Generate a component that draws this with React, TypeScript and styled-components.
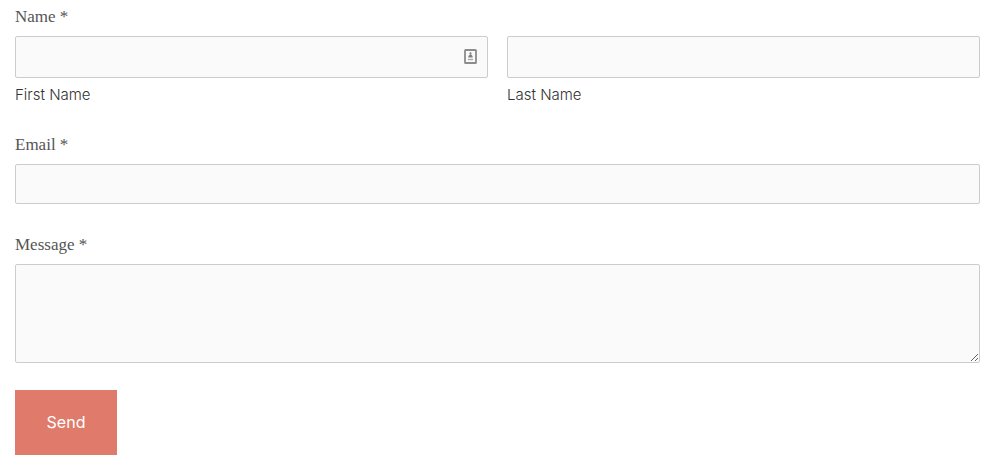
import React from "react";
import styled, { createGlobalStyle } from "styled-components";

const GlobalStyle = createGlobalStyle`
  *, *::before, *::after { box-sizing: border-box; }
  body { margin: 0; background: #fff; }
`;

const sans = `Inter, "Liberation Sans", sans-serif`;
const serif = `"Liberation Serif", serif`;

const Form = styled.form`
  display: flex;
  flex-direction: column;
  align-items: stretch;
  padding: 7px 20px 10px 15px;
`;

const NameGroup = styled.fieldset`
  min-width: 0;
  margin: 0 0 30px;
  padding: 0;
  border: 0;
`;

const Field = styled.div<{ $gap: number }>`
  display: flex;
  flex-direction: column;
  margin-bottom: ${(p) => p.$gap}px;
`;

const titleText = `
  display: block;
  margin: 0 0 9px;
  padding: 0;
  font: 400 17px/20px ${serif};
  color: #555;
`;

const Legend = styled.legend`${titleText}`;
const Label = styled.label`${titleText}`;

const Columns = styled.div`
  display: grid;
  grid-template-columns: 1fr 1fr;
  gap: 19px;
`;

const Column = styled.div`
  display: flex;
  flex-direction: column;
`;

const Caption = styled.label`
  margin-top: 7px;
  font: 300 15px/20px ${sans};
  color: #333;
`;

const controlLook = `
  display: block;
  width: 100%;
  margin: 0;
  padding: 0 12px;
  border: 1px solid #ccc;
  border-radius: 2px;
  background: #fafafa;
  color: #333;
  font: 400 14px/20px ${sans};
`;

const Input = styled.input<{ $height: number }>`
  ${controlLook}
  height: ${(p) => p.$height}px;
`;

const TextArea = styled.textarea`
  ${controlLook}
  height: 99px;
  padding: 12px;
  resize: vertical;
`;

const InputWrap = styled.div`
  position: relative;
`;

const ContactIcon = styled.svg`
  position: absolute;
  top: 13px;
  right: 11px;
`;

const SendButton = styled.button`
  align-self: flex-start;
  min-width: 102px;
  padding: 22px 30px;
  border: 0;
  background: #e07b6c;
  color: #fff;
  font: 400 16px/21px ${sans};
  cursor: pointer;
`;

export default function App() {
  return (
    <>
      <GlobalStyle />
      <Form onSubmit={(e) => e.preventDefault()}>
        <NameGroup>
          <Legend>Name *</Legend>
          <Columns>
            <Column>
              <InputWrap>
                <Input id="first-name" type="text" $height={42} />
                <ContactIcon width="13" height="15" viewBox="0 0 13 15" aria-hidden="true">
                  <rect x="1" y="1" width="11" height="13" rx="0.6" fill="#fafafa" stroke="#8c8c8c" strokeWidth="1.8" />
                  <circle cx="6.5" cy="4.4" r="1.1" fill="#808080" />
                  <path d="M4.4 8.6V7.4Q4.6 6.2 6.5 5.2Q8.4 6.2 8.6 7.4V8.6Z" fill="#808080" />
                  <path d="M4 10.5H9" stroke="#aaa" strokeWidth="1.4" />
                </ContactIcon>
              </InputWrap>
              <Caption htmlFor="first-name">First Name</Caption>
            </Column>
            <Column>
              <Input id="last-name" type="text" $height={42} />
              <Caption htmlFor="last-name">Last Name</Caption>
            </Column>
          </Columns>
        </NameGroup>
        <Field $gap={31}>
          <Label htmlFor="email">Email *</Label>
          <Input id="email" type="email" $height={40} />
        </Field>
        <Field $gap={27}>
          <Label htmlFor="message">Message *</Label>
          <TextArea id="message" />
        </Field>
        <SendButton type="submit">Send</SendButton>
      </Form>
    </>
  );
}
